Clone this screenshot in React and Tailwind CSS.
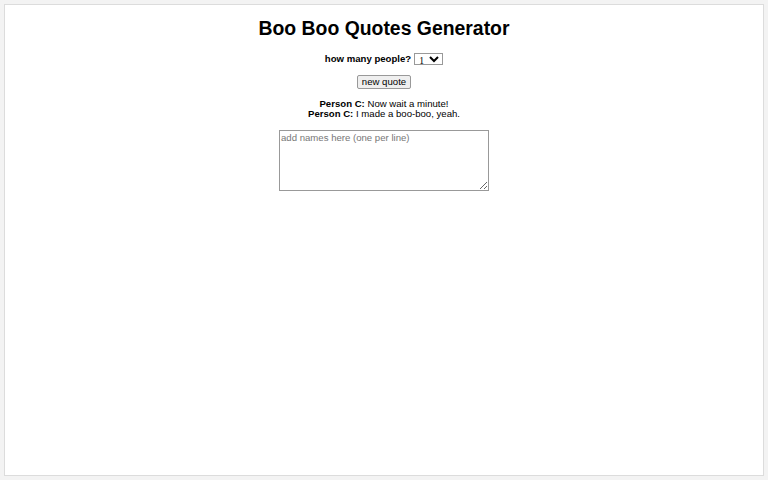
import React, { useState } from "react";

const lines = [
  { who: "Person C", text: "Now wait a minute!" },
  { who: "Person C", text: "I made a boo-boo, yeah." },
];

export default function App() {
  const [count, setCount] = useState("1");
  const [names, setNames] = useState("");

  return (
    <div className="h-[480px] bg-[#f3f3f3] p-[4px] font-['Liberation_Sans',Arial,sans-serif]">
      <div className="flex h-full flex-col items-center border border-[#dcdcdc] bg-white">
        <h1 className="mt-[12px] text-[19.4px] font-bold leading-[22px] text-black">Boo Boo Quotes Generator</h1>

        <div className="mt-[14px] flex h-[12px] items-center gap-[3px] text-[9.6px] text-black">
          <label htmlFor="count" className="font-bold">how many people?</label>
          <select
            id="count"
            value={count}
            onChange={(e) => setCount(e.target.value)}
            className="h-[12px] w-[29px] appearance-auto border border-[#999] bg-white font-['Liberation_Serif',serif] text-[9.6px] leading-none"
          >
            <option>1</option>
            <option>2</option>
            <option>3</option>
          </select>
        </div>

        <button className="mt-[10px] h-[14px] w-[54px] rounded-[2px] border border-[#999] bg-[#efefef] text-[9.6px] leading-none text-black">
          new quote
        </button>

        <div className="mt-[10px] text-center text-[9.6px] leading-[10px] text-black">
          {lines.map((line, i) => (
            <div key={i}>
              <span className="font-bold">{line.who}:</span> {line.text}
            </div>
          ))}
        </div>

        <textarea
          value={names}
          onChange={(e) => setNames(e.target.value)}
          placeholder="add names here (one per line)"
          className="mt-[11px] h-[61px] w-[210px] border border-[#999] px-[1px] py-[1px] text-[9.6px] leading-[11px] text-black placeholder:text-[#777]"
        />
      </div>
    </div>
  );
}
